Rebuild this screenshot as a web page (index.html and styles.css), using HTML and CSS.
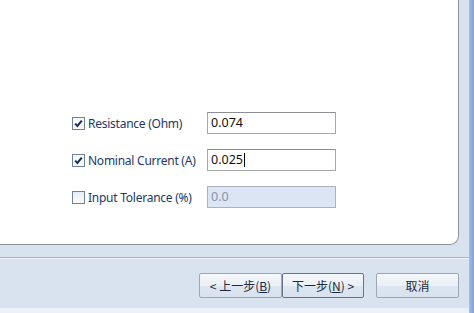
FILE: index.html
```html
<!DOCTYPE html>
<html lang="zh-CN">
    <head>
        <meta charset="UTF-8" />
        <meta name="viewport" content="width=device-width, initial-scale=1.0" />
        <title>Wizard</title>
        <link rel="stylesheet" href="styles.css">
    </head>
    <body>
        <div class="frame">
            <div class="main">
                <div class="panel">
                    <div class="form">
                        <div class="row">
                            <label class="check">
                                <span class="box on">
                                    <svg width="11" height="11" viewBox="0 0 11 11"><path d="M2.2 5.6 L4.4 8 L8.8 2.6" fill="none" stroke="#1b2d55" stroke-width="2"/></svg>
                                </span>
                                <span class="text">Resistance (Ohm)</span>
                            </label>
                            <div class="field">0.074</div>
                        </div>
                        <div class="row">
                            <label class="check">
                                <span class="box on">
                                    <svg width="11" height="11" viewBox="0 0 11 11"><path d="M2.2 5.6 L4.4 8 L8.8 2.6" fill="none" stroke="#1b2d55" stroke-width="2"/></svg>
                                </span>
                                <span class="text">Nominal Current (A)</span>
                            </label>
                            <div class="field">0.025<span class="caret"></span></div>
                        </div>
                        <div class="row">
                            <label class="check">
                                <span class="box"></span>
                                <span class="text">Input Tolerance (%)</span>
                            </label>
                            <div class="field disabled">0.0</div>
                        </div>
                    </div>
                </div>
                <div class="sep"></div>
                <div class="actions">
                    <button class="btn">&lt; 上一步(<u>B</u>)</button>
                    <button class="btn default">下一步(<u>N</u>) &gt;</button>
                    <button class="btn cancel">取消</button>
                </div>
                <div class="footer"></div>
            </div>
            <div class="edge"></div>
        </div>
    </body>
</html>
```

FILE: styles.css
```css
html,
body {
    margin: 0;
    width: 474px;
    height: 313px;
    overflow: hidden;
}

body {
    background-color: #d9e3f0;
    font-family: "Noto Sans", "Noto Sans CJK SC", sans-serif;
    font-size: 12px;
}

.frame {
    display: flex;
    height: 313px;
}

.main {
    width: 469px;
    display: flex;
    flex-direction: column;
}

.edge {
    width: 5px;
    background: linear-gradient(to right, #a9c0e4, #7a9fd8);
}

.panel {
    width: 458px;
    height: 244px;
    background-color: #fff;
    border-right: 1px solid #8c9097;
    border-bottom: 1px solid #8c9097;
    border-bottom-right-radius: 9px;
}

.form {
    padding: 112px 0 0 72px;
    display: flex;
    flex-direction: column;
    gap: 15px;
}

.row {
    display: flex;
    align-items: center;
}

.check {
    width: 135px;
    display: flex;
    align-items: center;
    gap: 3px;
    color: #22376a;
    letter-spacing: -0.25px;
}

.box {
    width: 11px;
    height: 11px;
    border: 1px solid #70819c;
    background: linear-gradient(#e9edf3, #fbfcfd);
    display: flex;
    align-items: center;
    justify-content: center;
}

.box.on {
    background: #f7f8fa;
}

.field {
    box-sizing: border-box;
    width: 129px;
    height: 22px;
    border: 1px solid #a4a8ae;
    border-top-color: #8b8f95;
    background-color: #fff;
    color: #111;
    padding: 0 3px;
    font-size: 12.5px;
    line-height: 20px;
    display: flex;
    align-items: center;
}

.field.disabled {
    background-color: #dbe5f3;
    border-color: #a9b2bf;
    color: #8a96a6;
}

.caret {
    display: inline-block;
    width: 1px;
    height: 14px;
    background-color: #000;
    margin-left: 1px;
}

.sep {
    margin-top: 12px;
    border-top: 1px solid #aab2bd;
    border-bottom: 1px solid #f3f6fa;
}

.actions {
    display: flex;
    justify-content: flex-end;
    padding: 14px 10px 0 0;
}

.btn {
    box-sizing: border-box;
    width: 83px;
    height: 25px;
    border: 1px solid #9ea8b5;
    border-radius: 2px;
    background: linear-gradient(#f4f7fb 0%, #eaf0f7 50%, #dde6f1 51%, #d8e2ee 100%);
    font-family: "Noto Sans CJK SC", sans-serif;
    font-size: 12px;
    color: #1d2a3d;
    padding: 0;
}

.btn.default {
    width: 82px;
    border-color: #66748a;
}

.btn.cancel {
    margin-left: 12px;
}

.footer {
    margin-top: auto;
    height: 5px;
    background-color: #ecf1f8;
}
```
